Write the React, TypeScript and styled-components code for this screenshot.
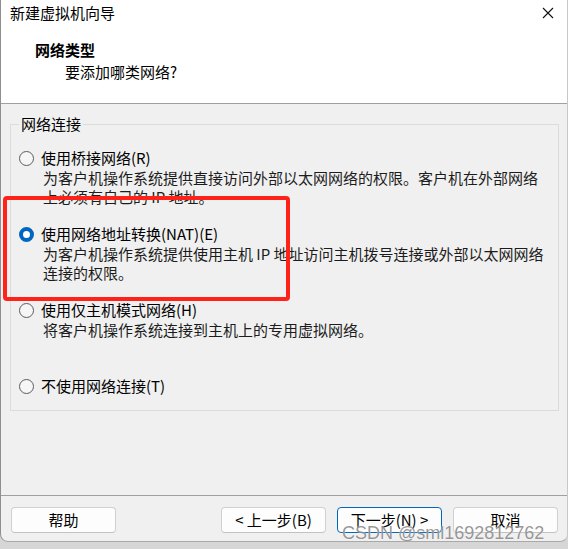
import styled, { createGlobalStyle } from "styled-components";

interface NetOption {
  id: string;
  label: string;
  lines: string[];
  checked?: boolean;
}

const options: NetOption[] = [
  {
    id: "bridge",
    label: "使用桥接网络(R)",
    lines: [
      "为客户机操作系统提供直接访问外部以太网网络的权限。客户机在外部网络",
      "上必须有自己的 IP 地址。",
    ],
  },
  {
    id: "nat",
    label: "使用网络地址转换(NAT)(E)",
    lines: [
      "为客户机操作系统提供使用主机 IP 地址访问主机拨号连接或外部以太网网络",
      "连接的权限。",
    ],
    checked: true,
  },
  {
    id: "host",
    label: "使用仅主机模式网络(H)",
    lines: ["将客户机操作系统连接到主机上的专用虚拟网络。"],
  },
  {
    id: "none",
    label: "不使用网络连接(T)",
    lines: [],
  },
];

const App = () => {
  return (
    <>
      <GlobalStyle />
      <Window>
        <Header>
          <TitleBar>
            <span>新建虚拟机向导</span>
            <CloseIcon width="12" height="12" viewBox="0 0 12 12">
              <path d="M1 1 L11 11 M11 1 L1 11" stroke="#111" strokeWidth="1.1" />
            </CloseIcon>
          </TitleBar>
          <StepTitle>网络类型</StepTitle>
          <StepSub>要添加哪类网络?</StepSub>
        </Header>

        <Panel>
          <Group>
            <Legend>网络连接</Legend>
            {options.map((opt, i) => (
              <Option key={opt.id} $first={i === 0}>
                <OptionRow>
                  <Radio $checked={!!opt.checked} />
                  <span>{opt.label}</span>
                </OptionRow>
                {opt.lines.length > 0 && (
                  <Desc>
                    {opt.lines.map((line) => (
                      <div key={line}>{line}</div>
                    ))}
                  </Desc>
                )}
              </Option>
            ))}
          </Group>
        </Panel>

        <Footer>
          <Button>帮助</Button>
          <Spacer />
          <Button>&lt; 上一步(B)</Button>
          <Button $primary>下一步(N) &gt;</Button>
          <Button>取消</Button>
        </Footer>

        <Highlight />
        <Watermark>CSDN @sml1692812762</Watermark>
      </Window>
    </>
  );
};

export default App;

const GlobalStyle = createGlobalStyle`
  body {
    margin: 0;
    background: #d6d6d6;
    font-family: "Noto Sans CJK SC", "Noto Sans", sans-serif;
    color: #000;
  }
`;

const Window = styled.div`
  position: relative;
  box-sizing: border-box;
  width: 568px;
  height: 542px;
  display: flex;
  flex-direction: column;
  background: #f0f0f0;
  border-left: 1px solid #8f8f8f;
  border-right: 1px solid #c8c8c8;
  border-bottom: 1px solid #a9a9a9;
  border-radius: 0 0 8px 8px;
  overflow: hidden;
  font-size: 15px;
`;

const Header = styled.div`
  height: 103px;
  background: #fff;
  border-bottom: 1px solid #a0a0a0;
`;

const TitleBar = styled.div`
  height: 26px;
  display: flex;
  align-items: center;
  justify-content: space-between;
  padding: 0 13px 0 9px;
  line-height: 26px;
`;

const CloseIcon = styled.svg`
  display: block;
  margin-top: -1px;
`;

const StepTitle = styled.div`
  margin: 14px 0 0 34px;
  line-height: 20px;
  font-weight: 700;
`;

const StepSub = styled.div`
  margin: 2px 0 0 64px;
  line-height: 20px;
`;

const Panel = styled.div`
  flex: 1;
  padding: 10px 8px 0 9px;
`;

const Group = styled.fieldset`
  margin: 0;
  padding: 14px 0 14px 8px;
  border: 1px solid #dcdcdc;
  min-width: 0;
`;

const Legend = styled.legend`
  padding: 0 2px;
  line-height: 20px;
`;

const Option = styled.div<{ $first: boolean }>`
  margin-top: ${({ $first }) => ($first ? "0" : "18px")};
`;

const OptionRow = styled.div`
  display: flex;
  align-items: center;
  gap: 7px;
  line-height: 20px;
  height: 20px;
`;

const Radio = styled.span<{ $checked: boolean }>`
  box-sizing: border-box;
  width: 15px;
  height: 15px;
  border-radius: 50%;
  flex: none;
  border: ${({ $checked }) => ($checked ? "4px solid #0067c0" : "1px solid #5c5c5c")};
  background: ${({ $checked }) => ($checked ? "#fff" : "#f6f6f6")};
`;

const Desc = styled.div`
  margin-left: 24px;
  min-height: 38px;
  line-height: 19px;
  letter-spacing: 0;
  color: #1c1c1c;
  white-space: nowrap;
`;

const Footer = styled.div`
  box-sizing: border-box;
  height: 46px;
  display: flex;
  align-items: flex-start;
  gap: 11px;
  padding: 11px 9px 0 10px;
  border-top: 1px solid #a0a0a0;
`;

const Spacer = styled.div`
  flex: 1;
`;

const Button = styled.button<{ $primary?: boolean }>`
  box-sizing: border-box;
  width: 105px;
  height: 26px;
  padding: 0;
  font-family: inherit;
  font-size: 15px;
  line-height: 24px;
  color: #000;
  background: #fdfdfd;
  border: 1px solid ${({ $primary }) => ($primary ? "#0067c0" : "#d0d0d0")};
  border-bottom-color: ${({ $primary }) => ($primary ? "#0067c0" : "#c2c2c2")};
  border-radius: 4px;
`;

const Highlight = styled.div`
  position: absolute;
  left: 2px;
  top: 196px;
  width: 287px;
  height: 105px;
  box-sizing: border-box;
  border: 4px solid #ff2219;
  border-radius: 4px;
  pointer-events: none;
`;

const Watermark = styled.div`
  position: absolute;
  left: 341px;
  top: 524px;
  font-family: "Liberation Sans", Arial, sans-serif;
  font-size: 18px;
  line-height: 18px;
  color: rgba(105, 105, 105, 0.7);
  text-shadow: 0 0 1px rgba(255, 255, 255, 0.9);
  white-space: nowrap;
  pointer-events: none;
`;
